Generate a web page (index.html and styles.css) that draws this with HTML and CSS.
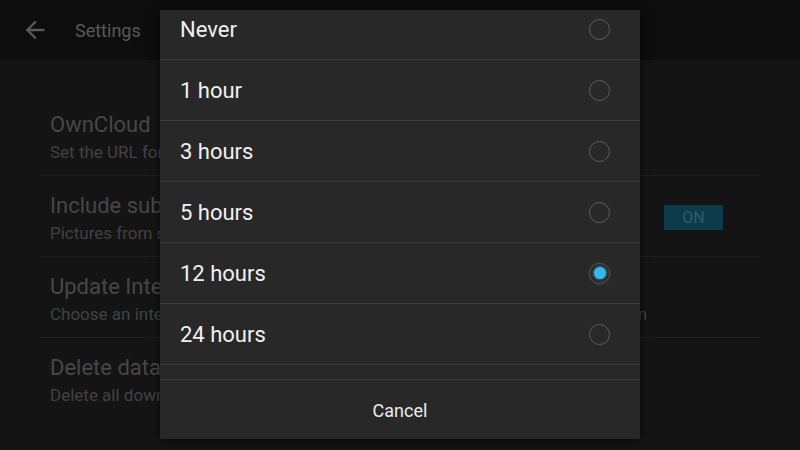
FILE: index.html
```html
<!DOCTYPE html>
<html>
<head>
<meta charset="utf-8">
<link rel="stylesheet" href="styles.css">
</head>
<body>
<div class="screen">
  <header class="topbar">
    <svg class="back" viewBox="0 0 24 24" width="28" height="28"><path d="M20 11H7.83l5.59-5.59L12 4l-8 8 8 8 1.41-1.41L7.83 13H20v-2z" fill="#5a5a5a"/></svg>
    <span class="title">Settings</span>
  </header>
  <main class="prefs">
    <div class="pref">
      <div class="pref-text">
        <div class="pref-title">OwnCloud</div>
        <div class="pref-sub">Set the URL for your OwnCloud server</div>
      </div>
    </div>
    <div class="pref">
      <div class="pref-text">
        <div class="pref-title">Include subfolders</div>
        <div class="pref-sub">Pictures from subfolders are shown too</div>
      </div>
      <div class="toggle">ON</div>
    </div>
    <div class="pref">
      <div class="pref-text">
        <div class="pref-title">Update Interval</div>
        <div class="pref-sub">Choose an interval for how often new pictures are loaded and shown in rotation</div>
      </div>
    </div>
    <div class="pref last">
      <div class="pref-text">
        <div class="pref-title">Delete data</div>
        <div class="pref-sub">Delete all downloaded pictures</div>
      </div>
    </div>
  </main>

  <div class="dialog">
    <div class="choices">
      <div class="choice-list">
        <div class="choice"><span>Never</span><i class="radio"></i></div>
        <div class="choice"><span>1 hour</span><i class="radio"></i></div>
        <div class="choice"><span>3 hours</span><i class="radio"></i></div>
        <div class="choice"><span>5 hours</span><i class="radio"></i></div>
        <div class="choice"><span>12 hours</span><i class="radio on"></i></div>
        <div class="choice"><span>24 hours</span><i class="radio"></i></div>
      </div>
    </div>
    <div class="buttons">Cancel</div>
  </div>
</div>
</body>
</html>
```

FILE: styles.css
```css
html, body {
  margin: 0;
  padding: 0;
}
body {
  width: 800px;
  height: 450px;
  overflow: hidden;
  background: #141414;
  font-family: Roboto, "Noto Sans", sans-serif;
}
.screen {
  position: relative;
  width: 800px;
  height: 450px;
}
.topbar {
  height: 60px;
  background: #0d0d0d;
  display: flex;
  align-items: center;
  padding-left: 21px;
  gap: 26px;
}
.back {
  display: block;
}
.title {
  font-size: 18px;
  color: #595959;
}
.prefs {
  padding: 35px 40px 0 40px;
}
.pref {
  display: flex;
  align-items: center;
  padding: 17px 37px 12px 10px;
  border-bottom: 1px solid #1f1f1f;
}
.pref.last {
  border-bottom: none;
}
.pref-text {
  flex: 1;
  min-width: 0;
}
.pref-title {
  font-size: 22px;
  line-height: 26px;
  color: #474747;
  white-space: nowrap;
}
.pref-sub {
  margin-top: 3px;
  font-size: 17px;
  line-height: 22px;
  color: #424242;
  white-space: nowrap;
}
.toggle {
  width: 59px;
  height: 25px;
  background: #0e3b4b;
  color: #355a68;
  font-size: 16px;
  display: flex;
  align-items: center;
  justify-content: center;
  margin-top: -3px;
}
.dialog {
  position: absolute;
  left: 160px;
  top: 10px;
  width: 480px;
  height: 429px;
  background: #282828;
  box-shadow: 0 2px 8px rgba(0,0,0,0.6);
  display: flex;
  flex-direction: column;
}
.choices {
  height: 369px;
  overflow: hidden;
}
.choice-list {
  margin-top: -11px;
}
.choice {
  height: 60px;
  border-bottom: 1px solid #3d3d3d;
  display: flex;
  align-items: center;
  justify-content: space-between;
  padding: 0 30px 0 20px;
  font-size: 22px;
  color: #f0f0f0;
}
.radio {
  width: 19px;
  height: 19px;
  border: 1.5px solid #5e5e5e;
  border-radius: 50%;
  display: flex;
  align-items: center;
  justify-content: center;
}
.radio.on {
  border-color: #4a5458;
  box-shadow: 0 0 0 1px #333;
}
.radio.on::after {
  content: "";
  width: 12px;
  height: 12px;
  border-radius: 50%;
  background: #35b8ec;
  box-shadow: 0 0 3px #33b5e5;
}
.buttons {
  flex: 1;
  border-top: 1px solid #3d3d3d;
  display: flex;
  align-items: center;
  justify-content: center;
  padding-top: 2px;
  font-size: 18px;
  color: #ececec;
}
```
